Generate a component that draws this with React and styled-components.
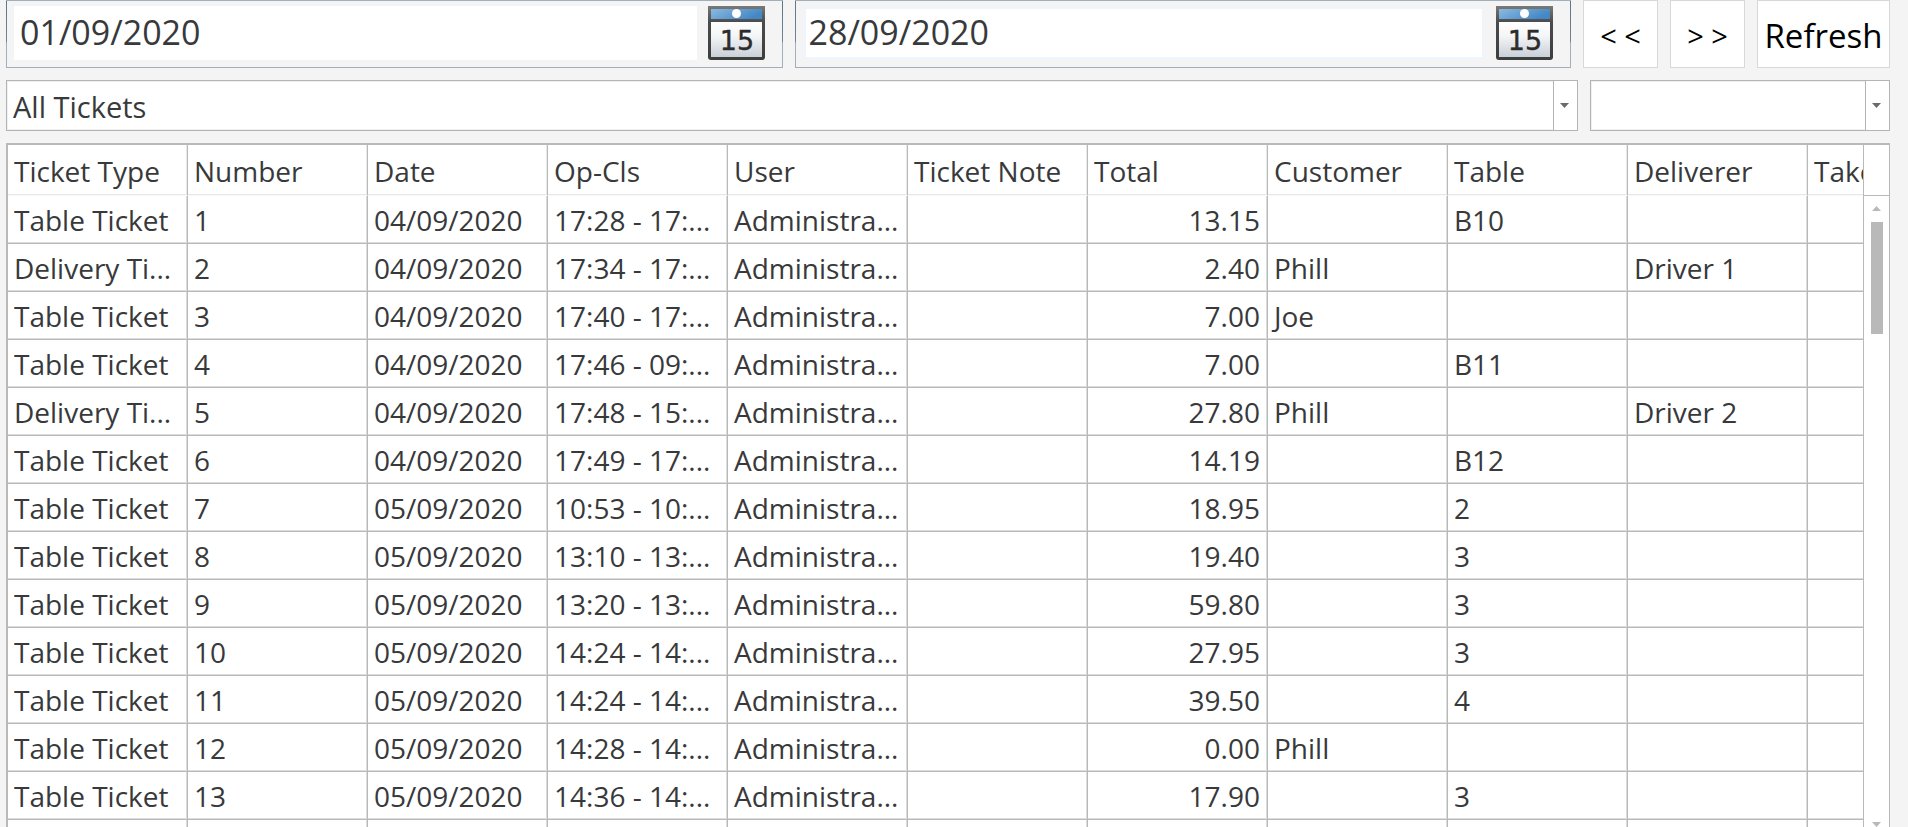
import styled, { createGlobalStyle } from "styled-components";

const GlobalStyle = createGlobalStyle`
  * {
    box-sizing: border-box;
  }
  body {
    margin: 0;
    background: #f4f4f4;
    color: #38393b;
    font-family: "Open Sans", "Noto Sans", sans-serif;
    overflow: hidden;
  }
  button,
  input,
  select {
    font-family: inherit;
    color: inherit;
  }
`;

// the panel runs a little past the bottom of the window
const Page = styled.main`
  display: flex;
  flex-direction: column;
  gap: 12px;
  height: calc(100vh + 12px);
  padding: 0 18px 0 6px;
`;

const Toolbar = styled.div`
  display: flex;
  gap: 12px;
  height: 68px;
  flex: none;
`;

const FilterBar = styled.div`
  display: flex;
  gap: 12px;
  flex: none;
`;

const DateBox = styled.div`
  flex: 1;
  min-width: 0;
  display: flex;
  align-items: center;
  gap: 11px;
  padding: 0 17px 2px 7px;
  border: 1px solid #a2afbb;
  border-image: linear-gradient(#a2afbb 1px, #5f7687 1px, #6f8494 60%, #a2afbb 64%) 1;
`;

const DateInput = styled.input`
  flex: 1;
  min-width: 0;
  height: 54px;
  padding: ${(props) => (props.$focused ? "0 3px 3px" : "0 6px 3px")};
  border: ${(props) => (props.$focused ? "3px solid #f0f4fb" : "none")};
  background: #fff;
  outline: none;
  font-size: 34px;
`;

const CalendarButton = styled.button`
  flex: none;
  display: flex;
  padding: 0;
  border: none;
  background: none;
`;

const ToolButton = styled.button`
  flex: none;
  width: ${(props) => props.$width};
  padding: 2px 0 0;
  border: 1px solid #d8d8d8;
  background: #fff;
  color: #000;
  font-size: ${(props) => props.$size};
`;

const SelectBox = styled.div`
  position: relative;
  flex: ${(props) => props.$flex};
  height: 51px;
  display: grid;
`;

const Select = styled.select`
  appearance: none;
  width: 100%;
  padding: 2px 30px 0 6px;
  border: 1px solid #b4b4b4;
  border-radius: 0;
  background: #fff;
  box-shadow: inset 0 0 0 1px #f0f0f0;
  outline: none;
  font-size: 29px;
`;

const SelectArrow = styled.span`
  position: absolute;
  top: 1px;
  right: 1px;
  bottom: 1px;
  width: 24px;
  display: grid;
  place-items: center;
  padding-right: 2px;
  border-left: 1px solid #b4b4b4;
  background: #fff;
  pointer-events: none;
`;

const Panel = styled.div`
  flex: 1;
  min-height: 0;
  display: flex;
  border: 2px solid #b9b9b9;
  border-right-width: 1px;
  background: #fff;
`;

const GridView = styled.div`
  flex: 1;
  min-width: 0;
  overflow: hidden;
`;

const Table = styled.table`
  table-layout: fixed;
  width: 1980px;
  border-collapse: separate;
  border-spacing: 0;
  font-size: 28px;
  line-height: 38px;
`;

const HeadCell = styled.th`
  height: 51px;
  padding: 2px 5px 0 6px;
  border-right: 1px solid #b9b9b9;
  border-bottom: 1px solid #f8f8f8;
  box-shadow: inset -1px -1px #e8e8e8;
  font-weight: 400;
  text-align: left;
  white-space: nowrap;
`;

const Cell = styled.td`
  height: 48px;
  padding: 0 7px 0 6px;
  border-right: 1px solid #b9b9b9;
  border-bottom: 1px solid #b9b9b9;
  box-shadow: inset -1px -1px #dcdcdc;
  text-align: ${(props) => props.$align || "left"};
  white-space: nowrap;
  overflow: hidden;
`;

const ScrollColumn = styled.div`
  flex: none;
  width: 26px;
  display: flex;
  flex-direction: column;
  border-left: 1px solid #b9b9b9;
`;

const ScrollCorner = styled.div`
  height: 51px;
  border-bottom: 1px solid #b9b9b9;
`;

const ScrollTrack = styled.div`
  flex: 1;
  display: flex;
  flex-direction: column;
  align-items: center;
  padding: 10px 0;
`;

const ScrollThumb = styled.div`
  width: 12px;
  height: 112px;
  margin: 11px 0 auto;
  background: #b9b9b9;
`;

const columns = [
  "Ticket Type",
  "Number",
  "Date",
  "Op-Cls",
  "User",
  "Ticket Note",
  "Total",
  "Customer",
  "Table",
  "Deliverer",
  "Takeaway",
];

const tickets = [
  ["Table Ticket", "1", "04/09/2020", "17:28 - 17:...", "13.15", "", "B10", ""],
  ["Delivery Ti...", "2", "04/09/2020", "17:34 - 17:...", "2.40", "Phill", "", "Driver 1"],
  ["Table Ticket", "3", "04/09/2020", "17:40 - 17:...", "7.00", "Joe", "", ""],
  ["Table Ticket", "4", "04/09/2020", "17:46 - 09:...", "7.00", "", "B11", ""],
  ["Delivery Ti...", "5", "04/09/2020", "17:48 - 15:...", "27.80", "Phill", "", "Driver 2"],
  ["Table Ticket", "6", "04/09/2020", "17:49 - 17:...", "14.19", "", "B12", ""],
  ["Table Ticket", "7", "05/09/2020", "10:53 - 10:...", "18.95", "", "2", ""],
  ["Table Ticket", "8", "05/09/2020", "13:10 - 13:...", "19.40", "", "3", ""],
  ["Table Ticket", "9", "05/09/2020", "13:20 - 13:...", "59.80", "", "3", ""],
  ["Table Ticket", "10", "05/09/2020", "14:24 - 14:...", "27.95", "", "3", ""],
  ["Table Ticket", "11", "05/09/2020", "14:24 - 14:...", "39.50", "", "4", ""],
  ["Table Ticket", "12", "05/09/2020", "14:28 - 14:...", "0.00", "Phill", "", ""],
  ["Table Ticket", "13", "05/09/2020", "14:36 - 14:...", "17.90", "", "3", ""],
  ["", "", "", "", "", "", "", ""],
];

const Triangle = ({ up, color }) => (
  <svg width="9" height="5" viewBox="0 0 9 5" aria-hidden="true">
    <path d={up ? "M0 5L4.500 0L9 5Z" : "M0 0H9L4.500 5Z"} fill={color} />
  </svg>
);

const CalendarIcon = () => (
  <svg width="57" height="54" viewBox="0 0 57 54" aria-hidden="true">
    <defs>
      <linearGradient id="frame" x1="0" y1="0" x2="0" y2="1">
        <stop offset="0" stopColor="#7a7b78" />
        <stop offset="0.300" stopColor="#4a4b4a" />
        <stop offset="1" stopColor="#3c3e3e" />
      </linearGradient>
      <linearGradient id="band" x1="0" y1="0" x2="1" y2="0.400">
        <stop offset="0" stopColor="#8bb9e0" />
        <stop offset="1" stopColor="#4388c5" />
      </linearGradient>
      <linearGradient id="sheet" x1="0" y1="0" x2="0" y2="1">
        <stop offset="0" stopColor="#fff" />
        <stop offset="0.400" stopColor="#f4f5f6" />
        <stop offset="1" stopColor="#c9d0d8" />
      </linearGradient>
    </defs>
    <path d="M0 0H57V51Q57 54 54 54H3Q0 54 0 51Z" fill="url(#frame)" />
    <rect x="3" y="3" width="51" height="10" fill="url(#band)" />
    <circle cx="28.500" cy="7.500" r="4.500" fill="#fff" />
    <rect x="3" y="16" width="51" height="35" fill="url(#sheet)" />
    <text
      x="29"
      y="44"
      textAnchor="middle"
      fontFamily="DejaVu Sans, sans-serif"
      fontSize="27"
      fill="#2c2c2c"
      stroke="#2c2c2c"
      strokeWidth="0.400"
    >
      15
    </text>
  </svg>
);

const DateField = ({ label, value, focused }) => {
  return (
    <DateBox>
      <DateInput aria-label={label} defaultValue={value} $focused={focused} />
      <CalendarButton aria-label={`Pick ${label}`}>
        <CalendarIcon />
      </CalendarButton>
    </DateBox>
  );
};

const Dropdown = ({ label, options, flex }) => {
  return (
    <SelectBox $flex={flex}>
      <Select aria-label={label}>
        {options.map((option) => (
          <option key={option}>{option}</option>
        ))}
      </Select>
      <SelectArrow>
        <Triangle color="#6b6b6b" />
      </SelectArrow>
    </SelectBox>
  );
};

const TicketRow = ({ ticket }) => {
  const [type, number, date, time, total, customer, table, deliverer] = ticket;
  return (
    <tr>
      <Cell>{type}</Cell>
      <Cell>{number}</Cell>
      <Cell>{date}</Cell>
      <Cell>{time}</Cell>
      <Cell>{type && "Administra..."}</Cell>
      <Cell />
      <Cell $align="right">{total}</Cell>
      <Cell>{customer}</Cell>
      <Cell>{table}</Cell>
      <Cell>{deliverer}</Cell>
      <Cell />
    </tr>
  );
};

const App = () => {
  return (
    <>
      <GlobalStyle />
      <Page>
        <Toolbar>
          <DateField label="start date" value="01/09/2020" />
          <DateField label="end date" value="28/09/2020" focused />
          <ToolButton $width="75px" $size="29px">
            &lt; &lt;
          </ToolButton>
          <ToolButton $width="75px" $size="29px">
            &gt; &gt;
          </ToolButton>
          <ToolButton $width="133px" $size="33px">
            Refresh
          </ToolButton>
        </Toolbar>
        <FilterBar>
          <Dropdown label="Ticket filter" options={["All Tickets"]} flex="1" />
          <Dropdown label="Value filter" options={[""]} flex="0 0 300px" />
        </FilterBar>
        <Panel>
          <GridView>
            <Table>
              <thead>
                <tr>
                  {columns.map((column) => (
                    <HeadCell key={column}>{column}</HeadCell>
                  ))}
                </tr>
              </thead>
              <tbody>
                {tickets.map((ticket, index) => (
                  <TicketRow key={index} ticket={ticket} />
                ))}
              </tbody>
            </Table>
          </GridView>
          <ScrollColumn>
            <ScrollCorner />
            <ScrollTrack>
              <Triangle up color="#b9b9b9" />
              <ScrollThumb />
              <Triangle color="#b9b9b9" />
            </ScrollTrack>
          </ScrollColumn>
        </Panel>
      </Page>
    </>
  );
};

export default App;
